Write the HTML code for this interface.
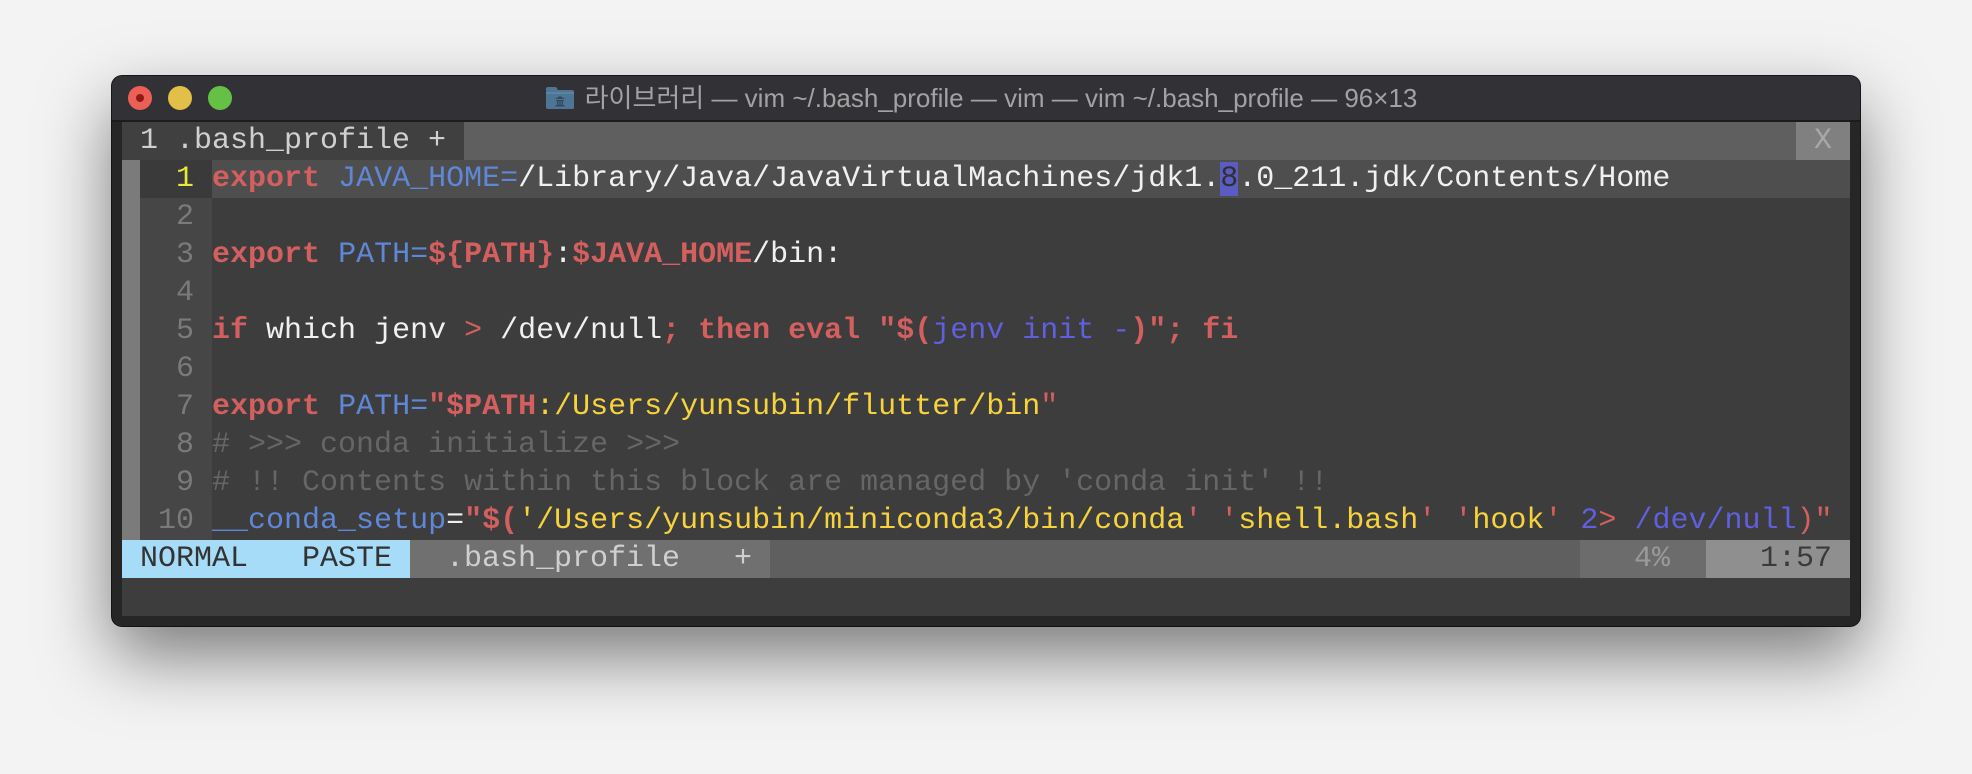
<!DOCTYPE html>
<html><head><meta charset="utf-8"><style>
html,body{margin:0;padding:0;}
body{width:1972px;height:774px;background:#f3f3f3;position:relative;overflow:hidden;font-family:"Liberation Mono",monospace;}
.win{position:absolute;left:112px;top:76px;width:1748px;height:550px;background:#262626;border-radius:10px;box-shadow:0 30px 70px rgba(0,0,0,0.5),0 0 0 1px #1a1a1a;overflow:hidden;}
.title{position:absolute;left:0;top:0;width:1748px;height:44px;background:#323236;border-bottom:2px solid #1c1c1c;}
.dot{position:absolute;top:10px;width:24px;height:24px;border-radius:50%;}
.ttl{position:absolute;left:0;width:1738px;top:6px;text-align:center;font-family:"Liberation Sans","Noto Sans CJK KR",sans-serif;font-size:26px;line-height:32px;color:#a2a2a2;}
.fold{display:inline-block;width:30px;height:24px;vertical-align:-3px;margin-right:10px;}
.r{position:absolute;left:10px;height:38px;width:1728px;font-size:30px;line-height:38px;white-space:pre;color:#f0f0f0;}
.s{position:absolute;left:10px;height:38px;width:1728px;font-size:30px;line-height:38px;color:#f0f0f0;}
.s span{position:absolute;top:0;white-space:pre;}
.k{color:#d35f5f;font-weight:bold}
.o{color:#d35f5f}
.b{color:#5f87d7}
.p{color:#5f5fdf}
.y{color:#f6d33d}
.c{color:#666666}
.ab{position:absolute;top:0;height:38px;}
</style></head><body>
<div class="win">
 <div class="title">
  <div class="dot" style="left:16px;background:#ec5f57"><div style="position:absolute;left:8px;top:8px;width:8px;height:8px;border-radius:50%;background:#8e1b13"></div></div>
  <div class="dot" style="left:56px;background:#e2bf48"></div>
  <div class="dot" style="left:96px;background:#66c046"></div>
  <div class="ttl"><svg class="fold" viewBox="0 0 30 24"><path d="M1 3 Q1 1 3 1 H11 L13 4 H27 Q29 4 29 6 V22 Q29 23 27 23 H3 Q1 23 1 21 Z" fill="#4f7595"/><path d="M1 7 H29" stroke="#5f88aa" stroke-width="1.5"/><path d="M10 13 L15 10 L20 13 Z M11 14 H19 V15 H11 Z M12 15 H13.5 V19 H12 Z M14.3 15 H15.7 V19 H14.3 Z M16.5 15 H18 V19 H16.5 Z M10.5 19 H19.5 V20.5 H10.5 Z" fill="#2f4b63"/></svg>라이브러리 — vim ~/.bash_profile — vim — vim ~/.bash_profile — 96×13</div>
 </div>
 <div style="position:absolute;left:10px;top:46px;width:1728px;height:494px;background:#3d3d3d;"></div>
 <!-- tabline -->
 <div class="s" style="top:46px;background:#5f5f5f;">
  <div class="ab" style="left:0;width:342px;background:#404040;"></div>
  <div class="ab" style="left:1674px;width:54px;background:#808080;"></div>
  <span style="left:0;color:#d0d0d0"> 1 .bash_profile +</span><span style="left:1692px;color:#a8a8a8">X</span>
 </div>
 <!-- lines -->
 <div style="position:absolute;left:10px;top:84px;width:18px;height:380px;background:#7b7b7b"></div>
 <div style="position:absolute;left:28px;top:122px;width:72px;height:342px;background:#464646"></div>
 <div style="position:absolute;left:28px;top:84px;width:72px;height:38px;background:#3a3a3a"></div>
 <div style="position:absolute;left:100px;top:84px;width:1638px;height:38px;background:#4e4e4e"></div>
 <div class="r" style="top:84px"> <span style="color:#e8e83a">  1 </span><span class="k">export</span><span class="b"> JAVA_HOME=</span>/Library/Java/JavaVirtualMachines/jdk1.<span style="background:#5b5bc4;color:#303030">8</span>.0_211.jdk/Contents/Home</div>
 <div class="r" style="top:122px"> <span style="color:#7a7a7a">  2 </span></div>
 <div class="r" style="top:160px"> <span style="color:#7a7a7a">  3 </span><span class="k">export</span><span class="b"> PATH=</span><span class="k">${PATH}</span>:<span class="k">$JAVA_HOME</span>/bin:</div>
 <div class="r" style="top:198px"> <span style="color:#7a7a7a">  4 </span></div>
 <div class="r" style="top:236px"> <span style="color:#7a7a7a">  5 </span><span class="k">if</span> which jenv <span class="o">&gt;</span> /dev/null<span class="k">; then eval</span> <span class="k">"$(</span><span class="p">jenv init -</span><span class="k">)"; fi</span></div>
 <div class="r" style="top:274px"> <span style="color:#7a7a7a">  6 </span></div>
 <div class="r" style="top:312px"> <span style="color:#7a7a7a">  7 </span><span class="k">export</span><span class="b"> PATH=</span><span class="k">"$PATH</span><span class="y">:/Users/yunsubin/flutter/bin</span><span class="o">"</span></div>
 <div class="r" style="top:350px"> <span style="color:#7a7a7a">  8 </span><span class="c"># &gt;&gt;&gt; conda initialize &gt;&gt;&gt;</span></div>
 <div class="r" style="top:388px"> <span style="color:#7a7a7a">  9 </span><span class="c"># !! Contents within this block are managed by 'conda init' !!</span></div>
 <div class="r" style="top:426px"> <span style="color:#7a7a7a"> 10 </span><span class="b">__conda_setup</span>=<span class="k">"$(</span><span class="y">'/Users/yunsubin/miniconda3/bin/conda</span><span class="o">'</span> <span class="o">'</span><span class="y">shell.bash</span><span class="o">'</span> <span class="o">'</span><span class="y">hook</span><span class="o">'</span> <span class="p">2</span><span class="o">&gt;</span> <span class="p">/dev/null</span><span class="o">)"</span></div>
 <!-- status -->
 <div class="s" style="top:464px;background:#5f5f5f">
  <div class="ab" style="left:0;width:288px;background:#a6dcf8"></div>
  <div class="ab" style="left:288px;width:360px;background:#707070"></div>
  <div class="ab" style="left:1458px;width:126px;background:#6c6c6c"></div>
  <div class="ab" style="left:1584px;width:144px;background:#8f8f8f"></div>
  <span style="left:18px;color:#333">NORMAL</span>
  <span style="left:180px;color:#333">PASTE</span>
  <span style="left:324px;color:#cfcfcf">.bash_profile</span>
  <span style="left:612px;color:#cfcfcf">+</span>
  <span style="left:1512px;color:#9a9a9a">4%</span>
  <span style="left:1638px;color:#3a3a3a">1:57</span>
 </div>
 <div style="position:absolute;left:10px;top:502px;width:1728px;height:38px;background:#3d3d3d"></div>
</div>
</body></html>
